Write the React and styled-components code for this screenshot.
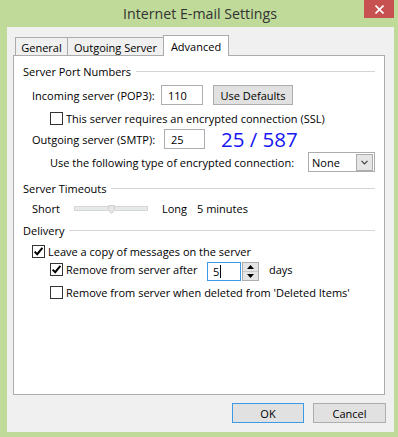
import React from 'react';
import styled, { createGlobalStyle } from 'styled-components';

const GlobalStyle = createGlobalStyle`
  html, body {
    margin: 0;
    padding: 0;
    background: #bfda99;
  }
  body {
    font-family: "Open Sans", "Noto Sans", sans-serif;
    font-size: 11px;
    color: #000;
  }
`;

const Frame = styled.div`
  width: 398px;
  height: 437px;
  background: #bfda99;
  display: flex;
  flex-direction: column;
`;

const TitleBar = styled.div`
  height: 27px;
  display: grid;
  grid-template-columns: 1fr auto 1fr;
  align-items: start;
`;

const Title = styled.div`
  grid-column: 2;
  line-height: 27px;
  font-size: 14.2px;
  color: #333;
  padding-left: 2px;
`;

const CloseButton = styled.div`
  justify-self: end;
  width: 30px;
  height: 18px;
  margin-right: 4px;
  background: #c75050;
  display: flex;
  align-items: center;
  justify-content: center;
`;

const Client = styled.div`
  flex: 1;
  margin: 0 4px 5px 7px;
  background: #f0f0f0;
  padding: 8px 9px 9px 6px;
  display: flex;
  flex-direction: column;
`;

const TabStrip = styled.div`
  display: flex;
  align-items: flex-end;
  height: 20px;
  margin-left: 2px;
  position: relative;
  z-index: 1;
`;

const Tab = styled.div`
  box-sizing: border-box;
  width: ${p => p.$w}px;
  height: ${p => (p.$active ? 21 : 18)}px;
  margin-bottom: ${p => (p.$active ? -1 : 0)}px;
  margin-left: ${p => (p.$first ? 0 : -1)}px;
  border: 1px solid #acacac;
  border-bottom: none;
  background: ${p => (p.$active ? '#fff' : '#f0f0f0')};
  display: flex;
  align-items: center;
  justify-content: center;
  padding-top: ${p => (p.$active ? 0 : 1)}px;
  position: relative;
  z-index: ${p => (p.$active ? 2 : 1)};
`;

const Panel = styled.div`
  box-sizing: border-box;
  height: 340px;
  border: 1px solid #acacac;
  background: #fff;
  padding: 7px 9px 0 9px;
  display: flex;
  flex-direction: column;
`;

const GroupHeading = styled.div`
  display: flex;
  align-items: center;
  gap: 5px;
  height: 16px;
  margin-top: ${p => p.$mt || 0}px;
  white-space: nowrap;

  &::after {
    content: '';
    flex: 1;
    height: 1px;
    background: #d5d5d5;
  }
`;

const Row = styled.div`
  display: flex;
  align-items: center;
  height: ${p => p.$h}px;
  margin-top: ${p => p.$mt}px;
  padding-left: ${p => p.$indent}px;
  white-space: nowrap;
`;

const Label = styled.span`
  width: ${p => (p.$w ? `${p.$w}px` : 'auto')};
  flex-shrink: 0;
`;

const TextBox = styled.div`
  box-sizing: border-box;
  width: ${p => p.$w}px;
  height: 20px;
  border: 1px solid #abadb3;
  background: #fff;
  padding-left: 6px;
  display: flex;
  align-items: center;
`;

const Button = styled.div`
  box-sizing: border-box;
  width: ${p => p.$w}px;
  height: 20px;
  margin-left: ${p => p.$ml || 0}px;
  border: 1px solid ${p => (p.$default ? '#3c9be8' : '#adadad')};
  background: #e1e1e1;
  display: flex;
  align-items: center;
  justify-content: center;
`;

const BigPorts = styled.span`
  margin-left: 16px;
  font-size: 20.5px;
  color: #1616f5;
  line-height: 20px;
`;

const Box = styled.span`
  box-sizing: border-box;
  width: 13px;
  height: 13px;
  border: 1px solid #333;
  background: #fff;
  flex-shrink: 0;
  margin-right: 3px;
  display: flex;
  align-items: center;
  justify-content: center;
`;

const Select = styled.div`
  box-sizing: border-box;
  width: 69px;
  height: 20px;
  border: 1px solid #acacac;
  background: #fff;
  display: flex;
  align-items: center;
  justify-content: space-between;
  padding: 1px 1px 1px 3px;
`;

const DropButton = styled.div`
  box-sizing: border-box;
  width: 17px;
  height: 17px;
  border: 1px solid #adadad;
  background: #e5e5e5;
  display: flex;
  align-items: center;
  justify-content: center;
`;

const Track = styled.div`
  box-sizing: border-box;
  position: relative;
  width: 74px;
  height: 5px;
  border: 1px solid #d6d6d6;
  background: #e7eaea;
  margin-right: 14px;
`;

const Thumb = styled.svg`
  position: absolute;
  left: 33px;
  top: -2px;
`;

const Spin = styled.div`
  display: flex;
  align-self: flex-start;
  margin-right: 10px;
`;

const SpinInput = styled.div`
  box-sizing: border-box;
  width: 34px;
  height: 19px;
  border: 1px solid #3c9be8;
  background: #fff;
  padding-left: 5px;
  display: flex;
  align-items: center;
`;

const Caret = styled.span`
  width: 1px;
  height: 13px;
  background: #000;
  margin-left: 1px;
`;

const SpinButtons = styled.div`
  box-sizing: border-box;
  width: 17px;
  height: 19px;
  margin-left: 1px;
  border: 1px solid #adadad;
  background: #e5e5e5;
  display: flex;
  flex-direction: column;
`;

const SpinHalf = styled.div`
  flex: 1;
  display: flex;
  align-items: center;
  justify-content: center;
  border-top: ${p => (p.$bottom ? '1px solid #c8c8c8' : 'none')};
`;

const ButtonRow = styled.div`
  display: flex;
  justify-content: flex-end;
  gap: 9px;
  margin-top: 8px;
  margin-right: -1px;
`;

function Check({ checked }) {
  return (
    <Box>
      {checked && (
        <svg width="11" height="11" viewBox="0 0 11 11">
          <path d="M1.6 5.6 L4.2 8.2 L9.4 1.8" fill="none" stroke="#000" strokeWidth="2" />
        </svg>
      )}
    </Box>
  );
}

function Chevron() {
  return (
    <svg width="7" height="5" viewBox="0 0 7 5">
      <path d="M0.5 0.8 L3.5 3.8 L6.5 0.8" fill="none" stroke="#404040" strokeWidth="1.2" />
    </svg>
  );
}

function Arrow({ down }) {
  return (
    <svg width="7" height="4" viewBox="0 0 7 4">
      <path d={down ? 'M0 0 H7 L3.5 4 Z' : 'M0 4 H7 L3.5 0 Z'} fill="#000" />
    </svg>
  );
}

export default function App() {
  return (
    <Frame>
      <GlobalStyle />
      <TitleBar>
        <Title>Internet E-mail Settings</Title>
        <CloseButton>
          <svg width="9" height="9" viewBox="0 0 9 9">
            <path d="M0.5 0.5 L8.5 8.5 M8.5 0.5 L0.5 8.5" stroke="#fff" strokeWidth="1.6" />
          </svg>
        </CloseButton>
      </TitleBar>
      <Client>
        <TabStrip>
          <Tab $first $w={53}>General</Tab>
          <Tab $w={97}>Outgoing Server</Tab>
          <Tab $active $w={66}>Advanced</Tab>
        </TabStrip>
        <Panel>
          <GroupHeading>Server Port Numbers</GroupHeading>
          <Row $h={20} $mt={6} $indent={9}>
            <Label $w={129}>Incoming server (POP3):</Label>
            <TextBox $w={42}>110</TextBox>
            <Button $w={80} $ml={10}>Use Defaults</Button>
          </Row>
          <Row $h={14} $mt={6} $indent={27}>
            <Check />
            This server requires an encrypted connection (SSL)
          </Row>
          <Row $h={20} $mt={4} $indent={9}>
            <Label $w={132}>Outgoing server (SMTP):</Label>
            <TextBox $w={41}>25</TextBox>
            <BigPorts>25 / 587</BigPorts>
          </Row>
          <Row $h={20} $mt={3} $indent={27}>
            <Label $w={258}>Use the following type of encrypted connection:</Label>
            <Select>
              None
              <DropButton>
                <Chevron />
              </DropButton>
            </Select>
          </Row>

          <GroupHeading $mt={8}>Server Timeouts</GroupHeading>
          <Row $h={16} $mt={4} $indent={9}>
            <Label $w={42}>Short</Label>
            <Track>
              <Thumb width="7" height="9" viewBox="0 0 7 9">
                <path d="M0.5 0.5 H6.5 V5.5 L3.5 8.5 L0.5 5.5 Z" fill="#e6e6e6" stroke="#d0d0d0" />
              </Thumb>
            </Track>
            <Label $w={35}>Long</Label>
            5 minutes
          </Row>

          <GroupHeading $mt={6}>Delivery</GroupHeading>
          <Row $h={14} $mt={6} $indent={9}>
            <Check checked />
            Leave a copy of messages on the server
          </Row>
          <Row $h={14} $mt={4} $indent={27}>
            <Check checked />
            <Label $w={141}>Remove from server after</Label>
            <Spin>
              <SpinInput>
                5<Caret />
              </SpinInput>
              <SpinButtons>
                <SpinHalf>
                  <Arrow />
                </SpinHalf>
                <SpinHalf $bottom>
                  <Arrow down />
                </SpinHalf>
              </SpinButtons>
            </Spin>
            days
          </Row>
          <Row $h={14} $mt={9} $indent={27}>
            <Check />
            Remove from server when deleted from 'Deleted Items'
          </Row>
        </Panel>
        <ButtonRow>
          <Button $w={72} $default>OK</Button>
          <Button $w={73}>Cancel</Button>
        </ButtonRow>
      </Client>
    </Frame>
  );
}
